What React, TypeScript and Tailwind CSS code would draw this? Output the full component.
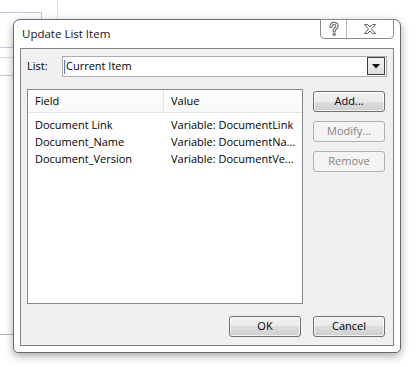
import React from "react";

const font = { fontFamily: '"Segoe UI", "Open Sans", "Noto Sans", sans-serif' };

function WinButton({ label, disabled }: { label: string; disabled?: boolean }) {
  if (disabled) {
    return (
      <div className="w-[72px] h-[21px] rounded-[3px] border border-[#adb2b5] bg-[#f4f4f4] flex items-center justify-center text-[11px] text-[#838383]">
        {label}
      </div>
    );
  }
  return (
    <div className="w-[72px] h-[21px] rounded-[3px] border border-[#707070] bg-[linear-gradient(#f2f2f2_0%,#ebebeb_50%,#dddddd_50%,#cfcfcf_100%)] shadow-[inset_0_0_0_1px_rgba(255,255,255,0.7)] flex items-center justify-center text-[11px] text-black">
      {label}
    </div>
  );
}

export default function App() {
  const rows = [
    ["Document Link", "Variable: DocumentLink"],
    ["Document_Name", "Variable: DocumentNa..."],
    ["Document_Version", "Variable: DocumentVe..."],
  ];
  return (
    <div className="relative w-[416px] h-[367px] bg-white overflow-hidden" style={font}>
      {/* background window edges */}
      <div className="absolute left-[57px] top-0 w-px h-[20px] bg-[#d9d9d9]" />
      <div className="absolute left-0 top-[12px] w-[42px] h-[10px] border-t border-r border-[#bccbdb]" />
      <div className="absolute left-0 top-[47px] w-[14px] h-px bg-[#bccbdb]" />
      <div className="absolute left-0 top-[57px] w-[14px] h-px bg-[#d3dde8]" />
      <div className="absolute left-0 top-[75px] w-[14px] h-px bg-[#bccbdb]" />
      <div className="absolute left-0 top-[334px] w-[14px] h-px bg-[#b5b5b5]" />

      {/* dialog */}
      <div className="absolute left-[13px] top-[19px] w-[388px] h-[334px] rounded-t-[7px] rounded-b-[5px] border border-[#6a6a6a] bg-white shadow-[0_3px_9px_rgba(0,0,0,0.35)] flex flex-col px-[6px] pb-[6px]">
        {/* title bar */}
        <div className="h-[28px] flex items-center pl-[2px] pb-[1px] text-[11.5px] text-[#141414] leading-none">
          Update List Item
        </div>
        <div className="absolute right-[6px] top-[-1px] flex h-[20px] border border-[#8a8a8a] rounded-b-[4px] bg-white">
          <div className="w-[26px] h-full flex items-center justify-center border-r border-[#b5b5b5]">
            <svg width="10" height="15" viewBox="0 0 10 15">
              <path d="M2 4.5 C2 2.2 3.5 1.5 5 1.5 C6.8 1.5 8 2.6 8 4.2 C8 6.3 5.2 6.5 5.2 9" fill="none" stroke="#5e5e5e" strokeWidth="3.2" strokeLinecap="round" />
              <circle cx="5.2" cy="12.3" r="1.6" fill="#5e5e5e" />
              <path d="M2 4.5 C2 2.2 3.5 1.5 5 1.5 C6.8 1.5 8 2.6 8 4.2 C8 6.3 5.2 6.5 5.2 9" fill="none" stroke="#ffffff" strokeWidth="1.2" strokeLinecap="round" />
              <circle cx="5.2" cy="12.3" r="0.6" fill="#ffffff" />
            </svg>
          </div>
          <div className="w-[46px] h-full flex items-center justify-center">
            <svg width="12" height="10" viewBox="0 0 12 10">
              <polygon points="0.5,0.5 3.5,0.5 6,3 8.5,0.5 11.5,0.5 7.5,5 11.5,9.5 8.5,9.5 6,7 3.5,9.5 0.5,9.5 4.5,5" fill="#ffffff" stroke="#5e5e5e" strokeWidth="1" strokeLinejoin="round" />
            </svg>
          </div>
        </div>

        {/* client area */}
        <div className="flex-1 border border-[#838383] bg-[#f0f0f0] flex flex-col px-[6px] pt-[7px] text-[11px] text-black">
          <div className="flex items-center">
            <div className="w-[35px]">List:</div>
            <div className="flex-1 h-[21px] border border-[#abadb3] bg-white flex items-center relative">
              <span className="ml-[1px] w-px h-[14px] bg-[#4a7bd0]" />
              <span className="ml-[1px]">Current Item</span>
              <div className="absolute right-[1px] top-[0px] w-[18px] h-[18px] border border-[#3c3c3c] bg-[linear-gradient(#f3f3f3,#dcdcdc)] flex items-center justify-center">
                <svg width="8" height="5" viewBox="0 0 8 5">
                  <polygon points="0,0 8,0 4,4.5" fill="#000" />
                </svg>
              </div>
            </div>
          </div>

          <div className="flex mt-[12px]">
            <div className="w-[276px] h-[215px] border border-[#828790] bg-white flex flex-col">
              <div className="h-[23px] flex border-b border-[#e5e5e5] bg-[linear-gradient(#ffffff,#f7f8f9)]">
                <div className="w-[136px] pl-[7px] flex items-center border-r border-[#e3e3e3]">Field</div>
                <div className="pl-[7px] flex items-center">Value</div>
              </div>
              <div className="pt-[4px]">
                {rows.map(([a, b]) => (
                  <div key={a} className="flex h-[17px] items-center">
                    <div className="w-[136px] pl-[7px] whitespace-nowrap">{a}</div>
                    <div className="pl-[7px] whitespace-nowrap">{b}</div>
                  </div>
                ))}
              </div>
            </div>
            <div className="ml-[10px] mt-[2px] flex flex-col gap-[9px]">
              <WinButton label="Add..." />
              <WinButton label="Modify..." disabled />
              <WinButton label="Remove" disabled />
            </div>
          </div>

          <div className="flex justify-end gap-[12px] mt-[12px] mr-[2px]">
            <WinButton label="OK" />
            <WinButton label="Cancel" />
          </div>
        </div>
      </div>
    </div>
  );
}
